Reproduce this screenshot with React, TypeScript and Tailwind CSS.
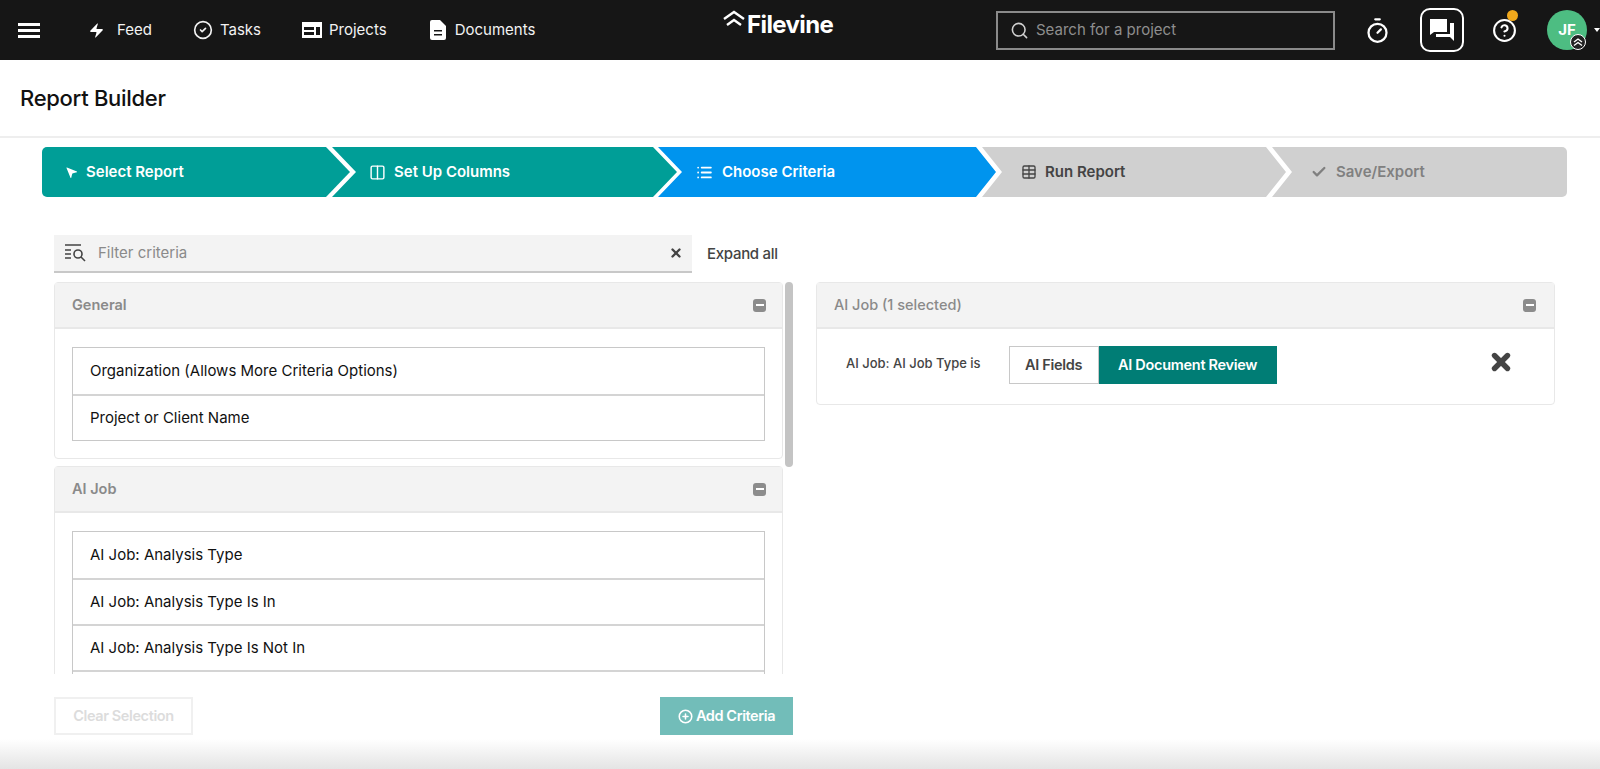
import { Search, Timer, CircleHelp, Zap, CircleCheck, FileText, Columns2, List, Table, Check, X, CirclePlus, MousePointer2 } from "lucide-react";

function NavLink({ icon, label, gap }: { icon: React.ReactNode; label: string; gap: string }) {
  return (
    <a className={`flex items-center ${gap} text-[15px] text-[#f2f2f2]`}>
      {icon}
      <span>{label}</span>
    </a>
  );
}

function MinusBox() {
  return (
    <span className="flex h-[13px] w-[13px] items-center justify-center rounded-[3px] bg-[#8c8c8c]">
      <span className="h-[2px] w-[8px] bg-white" />
    </span>
  );
}

function Panel({ title, rows, className }: { title: string; rows: string[]; className?: string }) {
  return (
    <div className={`rounded-[4px] border-[1.5px] border-[#e8e8e8] ${className ?? ""}`}>
      <div className="flex h-[46px] items-center justify-between border-b-2 border-[#e8e8e8] bg-[#f3f3f3] pl-[17px] pr-[16px]">
        <span className="text-[14.5px] font-semibold text-[#8a8a8a]">{title}</span>
        <MinusBox />
      </div>
      <div className="px-[17px] pb-[17px] pt-[18px]">
        <div className="border border-[#c8c8c8]">
          {rows.map((r, i) => (
            <div key={r} className={`flex h-[46px] items-center pl-[17px] text-[15px] text-[#111] ${i > 0 ? "border-t-2 border-[#d4d4d4]" : ""}`}>
              {r}
            </div>
          ))}
        </div>
      </div>
    </div>
  );
}

export default function App() {
  return (
    <div className="relative flex h-[769px] w-[1600px] flex-col overflow-hidden bg-white font-['Inter',sans-serif]">
      <header className="flex h-[60px] shrink-0 items-center bg-[#161616] text-white">
        <div className="ml-[18px] flex h-[15px] w-[22px] flex-col justify-between">
          <span className="h-[3px] bg-white" />
          <span className="h-[3px] bg-white" />
          <span className="h-[3px] bg-white" />
        </div>
        <nav className="ml-[48px] flex items-center">
          <NavLink gap="gap-[12px]" label="Feed" icon={<Zap size={17} fill="white" strokeWidth={0} />} />
          <div className="ml-[41px]">
            <NavLink gap="gap-[7px]" label="Tasks" icon={<CircleCheck size={20} strokeWidth={2} />} />
          </div>
          <div className="ml-[41px]">
            <NavLink
              gap="gap-[7px]"
              label="Projects"
              icon={
                <svg width="20" height="16" viewBox="0 0 20 16" fill="white">
                  <path d="M0 0h20v16H0z" />
                  <path d="M2 5h10v3H2zM2 10h10v3H2zM14 5h4v8h-4z" fill="#161616" />
                </svg>
              }
            />
          </div>
          <div className="ml-[43px]">
            <NavLink
              gap="gap-[9px]"
              label="Documents"
              icon={
                <svg width="16" height="20" viewBox="0 0 16 20" fill="white">
                  <path d="M2 0h8l6 6v12a2 2 0 0 1-2 2H2a2 2 0 0 1-2-2V2a2 2 0 0 1 2-2z" />
                  <path d="M4 10h8v1.6H4zM4 14h8v1.6H4z" fill="#161616" />
                </svg>
              }
            />
          </div>
        </nav>
        <div className="absolute left-[722px] top-[10px] flex items-end">
          <svg width="24" height="18" viewBox="0 0 24 18" fill="none" stroke="white" strokeWidth="2.4" className="mb-[12px]">
            <path d="M2 9l10-7 10 7" />
            <path d="M5 15l7-5 7 5" />
          </svg>
          <span className="ml-[1px] text-[24px] font-bold leading-[30px] tracking-[-0.6px] text-white">Filevine</span>
        </div>
        <div className="ml-auto flex h-[39px] w-[339px] items-center border-2 border-[#8a8a8a] pl-[12px]">
          <Search size={19} className="text-[#d0d0d0]" />
          <span className="ml-[7px] text-[15px] text-[#8e8e8e]">Search for a project</span>
        </div>
        <Timer size={27} strokeWidth={2} className="ml-[29px]" />
        <button className="ml-[29px] flex h-[44px] w-[44px] items-center justify-center rounded-[10px] border-2 border-white">
          <svg width="24" height="22" viewBox="0 0 24 22" fill="white">
            <path d="M0 0h17v13H4l-4 3z" />
            <path d="M20 4h4v18l-4-4H6v-3h14z" />
          </svg>
        </button>
        <div className="relative ml-[28px]">
          <CircleHelp size={25} strokeWidth={2} />
          <span className="absolute -right-[1px] -top-[8px] h-[11px] w-[11px] rounded-full bg-[#f0a81c]" />
        </div>
        <div className="relative ml-[30px] flex h-[40px] w-[40px] items-center justify-center rounded-full bg-[#4dbd82] text-[15px] font-bold">
          JF
          <span className="absolute -bottom-[0px] right-[1px] flex h-[16px] w-[16px] items-center justify-center rounded-full border border-white bg-[#222]">
            <svg width="10" height="10" viewBox="0 0 10 10" fill="none" stroke="white" strokeWidth="1.4">
              <path d="M1 5l4-3 4 3" />
              <path d="M1 8.5l4-3 4 3" />
            </svg>
          </span>
        </div>
        <span className="ml-[7px] mr-0 h-0 w-0 border-x-[3.5px] border-t-[4px] border-x-transparent border-t-white" />
      </header>

      <div className="flex h-[78px] shrink-0 items-center border-b-2 border-[#eeeeee] pl-[20px]">
        <h1 className="text-[22px] font-medium tracking-[-0.3px] text-[#111]">Report Builder</h1>
      </div>

      <div className="ml-[42px] mt-[9px] flex h-[50px] w-[1525px] shrink-0 text-[15px] font-semibold">
        <div className="flex w-[308px] items-center rounded-l-[5px] bg-[#009e97] pl-[22px] text-white [clip-path:polygon(0_0,calc(100%_-_24px)_0,100%_50%,calc(100%_-_24px)_100%,0_100%)]">
          <MousePointer2 size={15} fill="white" strokeWidth={0} />
          <span className="ml-[7px]">Select Report</span>
        </div>
        <div className="-ml-[18px] flex w-[345px] items-center bg-[#009e97] pl-[37px] text-white [clip-path:polygon(0_0,calc(100%_-_24px)_0,100%_50%,calc(100%_-_24px)_100%,0_100%,24px_50%)]">
          <Columns2 size={17} />
          <span className="ml-[8px]">Set Up Columns</span>
        </div>
        <div className="-ml-[19px] flex w-[338px] items-center bg-[#0094ee] pl-[38px] text-white [clip-path:polygon(0_0,calc(100%_-_20px)_0,100%_50%,calc(100%_-_20px)_100%,0_100%,24px_50%)]">
          <List size={17} strokeWidth={2.5} />
          <span className="ml-[9px]">Choose Criteria</span>
        </div>
        <div className="-ml-[14px] flex w-[304px] items-center bg-[#d0d0d0] pl-[39px] text-[#444] [clip-path:polygon(0_0,calc(100%_-_20px)_0,100%_50%,calc(100%_-_20px)_100%,0_100%,20px_50%)]">
          <Table size={16} />
          <span className="ml-[8px]">Run Report</span>
        </div>
        <div className="-ml-[14px] flex w-[295px] items-center rounded-r-[5px] bg-[#d0d0d0] pl-[39px] text-[#808080] [clip-path:polygon(0_0,100%_0,100%_100%,0_100%,20px_50%)]">
          <Check size={16} strokeWidth={3.5} />
          <span className="ml-[9px]">Save/Export</span>
        </div>
      </div>

      <div className="flex min-h-0 flex-1">
        <div className="ml-[54px] w-[739px] shrink-0">
          <div className="mt-[38px] flex items-center">
            <div className="flex h-[38px] w-[638px] items-center border-b-2 border-[#c8c8c8] bg-[#f3f3f3] pl-[11px] pr-[9px]">
              <svg width="22" height="18" viewBox="0 0 22 18" fill="none" stroke="#444" strokeWidth="1.6">
                <path d="M0 1h16M0 6h6M0 10h6M0 14h6" />
                <circle cx="13" cy="10" r="4" />
                <path d="M16 13l4 4" />
              </svg>
              <span className="ml-[11px] text-[15px] text-[#8a8a8a]">Filter criteria</span>
              <X size={14} strokeWidth={4} className="ml-auto text-[#444]" />
            </div>
            <span className="ml-[15px] text-[15px] font-medium tracking-[-0.3px] text-[#444]">Expand all</span>
          </div>
          <div className="relative mt-[9px] h-[392px] overflow-hidden">
            <div className="w-[729px]">
              <Panel title="General" rows={["Organization (Allows More Criteria Options)", "Project or Client Name"]} />
              <Panel
                className="mt-[7px]"
                title="AI Job"
                rows={["AI Job: Analysis Type", "AI Job: Analysis Type Is In", "AI Job: Analysis Type Is Not In", "AI Job: Analysis Type Is"]}
              />
            </div>
            <div className="absolute right-0 top-0 h-[185px] w-[8px] rounded-[4px] bg-[#c4c4c4]" />
          </div>
          <div className="mt-[23px] flex items-center justify-between">
            <button className="flex h-[38px] w-[139px] items-center justify-center border-2 border-[#f0f0f0] text-[14.5px] font-semibold tracking-[-0.4px] text-[#dcdcdc]">
              Clear Selection
            </button>
            <button className="flex h-[38px] w-[133px] items-center justify-center gap-[3px] bg-[#72bdb9] text-[14.5px] font-semibold tracking-[-0.4px] text-white">
              <CirclePlus size={15} strokeWidth={2.5} />
              Add Criteria
            </button>
          </div>
        </div>

        <div className="ml-[23px] mt-[85px] h-[123px] w-[739px] rounded-[4px] border-[1.5px] border-[#e8e8e8]">
          <div className="flex h-[46px] items-center justify-between border-b-2 border-[#e8e8e8] bg-[#f3f3f3] pl-[17px] pr-[18px]">
            <span className="text-[14.5px] font-medium text-[#8a8a8a]">AI Job (1 selected)</span>
            <MinusBox />
          </div>
          <div className="flex pl-[29px] pt-[17px]">
            <span className="mt-[8px] text-[13px] font-medium text-[#444]">AI Job: AI Job Type is</span>
            <div className="ml-[28px] flex h-[38px] items-stretch text-[14.5px] font-semibold tracking-[-0.3px]">
              <span className="flex w-[90px] items-center justify-center border border-[#c8c8c8] text-[#444]">AI Fields</span>
              <span className="flex w-[178px] items-center justify-center bg-[#007d75] text-white">AI Document Review</span>
            </div>
            <X size={26} strokeWidth={5} className="ml-[211px] mt-[3px] text-[#444]" />
          </div>
        </div>
      </div>

      <div className="h-[30px] shrink-0 bg-gradient-to-b from-white to-[#e4e4e4]" />
    </div>
  );
}
